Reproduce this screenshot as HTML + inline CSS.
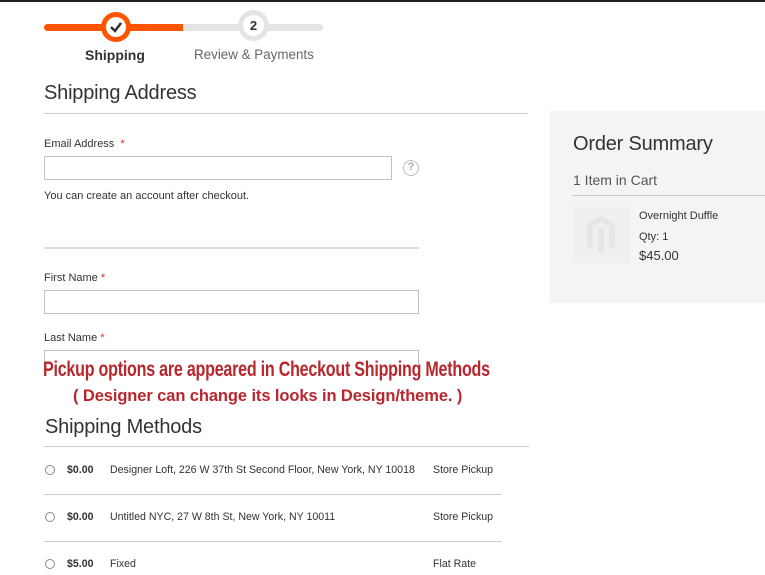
<!DOCTYPE html>
<html><head><style>
*{margin:0;padding:0;box-sizing:border-box}
body{width:765px;height:575px;overflow:hidden;background:#fff;position:relative;font-family:"Liberation Sans",sans-serif;color:#333}
.a{position:absolute;white-space:nowrap}
.h{font-size:20px;color:#333;font-weight:300;letter-spacing:-0.2px}
.l{font-size:11px;color:#333}
.st{color:#e02b27}
.in{position:absolute;border:1px solid #c2c2c2;background:#fff;height:24px}
.hr{position:absolute;height:1px;background:#ccc}
.r{font-size:10.6px;color:#333}
.rad{position:absolute;width:10px;height:10px;border:1px solid #888;border-radius:50%}
</style></head><body>
<div class="a" style="left:0;top:0;width:765px;height:2px;background:#222"></div>
<div class="a" style="left:44px;top:24px;width:279px;height:7px;border-radius:4px;background:#e4e4e4"></div>
<div class="a" style="left:44px;top:24px;width:139px;height:7px;border-radius:4px 0 0 4px;background:#ff5501"></div>
<div class="a" style="left:101px;top:12px;width:30px;height:30px;border-radius:50%;background:#ff5501"></div>
<div class="a" style="left:106px;top:17px;width:20px;height:20px;border-radius:50%;background:#fff"></div>
<svg class="a" style="left:106px;top:17px" width="20" height="20"><path d="M5 10 L9 14 L15 6" stroke="#333" stroke-width="2.5" fill="none"/></svg>
<div class="a" style="left:238px;top:10px;width:31px;height:31px;border-radius:50%;background:#e4e4e4"></div>
<div class="a" style="left:243px;top:15px;width:21px;height:21px;border-radius:50%;background:#fff;font-size:13px;font-weight:bold;text-align:center;line-height:21px">2</div>
<div class="a" style="left:85px;top:47px;font-size:14px;font-weight:bold;color:#333">Shipping</div>
<div class="a" style="left:194px;top:47px;font-size:13.4px;color:#666">Review &amp; Payments</div>
<div class="a h" style="left:44px;top:82px">Shipping Address</div>
<div class="hr" style="left:44px;top:113px;width:484px"></div>
<div class="a l" style="left:44px;top:138px">Email Address <span class="st">&nbsp;*</span></div>
<div class="in" style="left:44px;top:156px;width:348px"></div>
<div class="a" style="left:403px;top:160px;width:16px;height:16px;border:1.5px solid #bbb;border-radius:50%;color:#aaa;font-size:11px;font-weight:bold;text-align:center;line-height:13px">?</div>
<div class="a l" style="left:44px;top:190px">You can create an account after checkout.</div>
<div class="hr" style="left:44px;top:247px;width:375px;background:#ddd;height:2px"></div>
<div class="a l" style="left:44px;top:272px">First Name <span class="st">*</span></div>
<div class="in" style="left:44px;top:290px;width:375px"></div>
<div class="a l" style="left:44px;top:332px">Last Name <span class="st">*</span></div>
<div class="in" style="left:44px;top:350px;width:375px;height:14px;border-bottom:none"></div>
<div class="a" style="left:43px;top:358px;font-size:21px;font-weight:bold;color:#b7282e;transform:scaleX(0.765);transform-origin:left;letter-spacing:-0.3px">Pickup options are appeared in Checkout Shipping Methods</div>
<div class="a" style="left:73px;top:387px;font-size:16.5px;font-weight:bold;color:#b7282e;letter-spacing:-0.1px">( Designer can change its looks in Design/theme. )</div>
<div class="a h" style="left:45px;top:416px">Shipping Methods</div>
<div class="hr" style="left:44px;top:446px;width:485px"></div>
<div class="rad" style="left:45px;top:465px"></div>
<div class="a r" style="left:67px;top:464px;font-weight:bold">$0.00</div>
<div class="a r" style="left:110px;top:464px">Designer Loft, 226 W 37th St Second Floor, New York, NY 10018</div>
<div class="a r" style="left:433px;top:464px">Store Pickup</div>
<div class="hr" style="left:44px;top:494px;width:458px"></div>
<div class="rad" style="left:45px;top:512px"></div>
<div class="a r" style="left:67px;top:511px;font-weight:bold">$0.00</div>
<div class="a r" style="left:110px;top:511px">Untitled NYC, 27 W 8th St, New York, NY 10011</div>
<div class="a r" style="left:433px;top:511px">Store Pickup</div>
<div class="hr" style="left:44px;top:541px;width:458px"></div>
<div class="rad" style="left:45px;top:559px"></div>
<div class="a r" style="left:67px;top:558px;font-weight:bold">$5.00</div>
<div class="a r" style="left:110px;top:558px">Fixed</div>
<div class="a r" style="left:433px;top:558px">Flat Rate</div>
<div class="a" style="left:550px;top:111px;width:215px;height:192px;background:#f4f4f4"></div>
<div class="a h" style="left:573px;top:133px">Order Summary</div>
<div class="a" style="left:573px;top:172px;font-size:14px;color:#555">1 Item in Cart</div>
<div class="hr" style="left:572px;top:195px;width:193px"></div>
<div class="a" style="left:573px;top:207px;width:57px;height:56px;background:#efefef"></div>
<svg class="a" style="left:584px;top:213px" width="34" height="42"><path d="M3 11 L17 3 L31 11 V33 L25 36 V14 L17 9 L9 14 V36 L3 33 Z M14 16 L17 14 L20 16 V38 L17 40 L14 38 Z" fill="#e6e6e6"/></svg>
<div class="a" style="left:639px;top:210px;font-size:11px">Overnight Duffle</div>
<div class="a" style="left:639px;top:231px;font-size:11px">Qty: 1</div>
<div class="a" style="left:639px;top:248px;font-size:13px">$45.00</div>
</body></html>
